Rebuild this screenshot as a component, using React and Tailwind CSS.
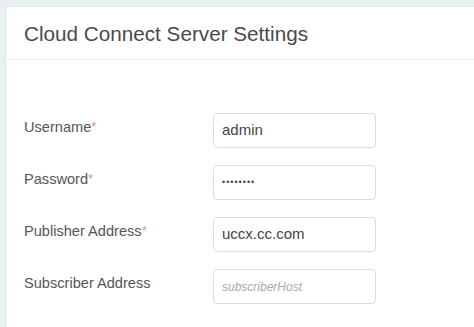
import React from 'react';

const fields = [
  { label: 'Username', required: true, value: 'admin' },
  { label: 'Password', required: true, value: '••••••••', password: true },
  { label: 'Publisher Address', required: true, value: 'uccx.cc.com' },
  { label: 'Subscriber Address', required: false, placeholder: 'subscriberHost' },
];

const App = () => {
  return (
    <div
      className="w-[474px] h-[327px] overflow-hidden bg-[#e9f0f2] pt-[6px] pl-[5px]"
      style={{ fontFamily: '"Liberation Sans", Arial, sans-serif' }}
    >
      <div className="h-full bg-white border-l border-t border-[#dfe5e8]">
        {/* Header */}
        <div className="h-[53px] flex items-center px-[18px] pt-[1px] border-b border-[#eeeeee]">
          <h1 className="text-[20.7px] text-[#4a4a4a]">Cloud Connect Server Settings</h1>
        </div>

        {/* Form */}
        <div className="pt-[53px] pl-[18px] flex flex-col gap-[17px]">
          {fields.map((f, i) => (
            <div key={i} className="flex items-start">
              <div className="w-[189px] pt-[4px] text-[14.6px] leading-[20px] text-[#555555]">
                {f.label}
                {f.required && <span className="text-[#e88a8a] text-[13px] align-top">*</span>}
              </div>
              <div className="w-[163px] h-[35px] border border-[#dcdcdc] rounded-[4px] flex items-center px-[8px]">
                {f.value ? (
                  <span className={f.password ? 'text-[9px] tracking-[1px] text-[#444444]' : 'text-[15px] text-[#444444]'}>
                    {f.value}
                  </span>
                ) : (
                  <span className="text-[12px] italic text-[#a8a8a8]">{f.placeholder}</span>
                )}
              </div>
            </div>
          ))}
        </div>
      </div>
    </div>
  );
};

export default App;
